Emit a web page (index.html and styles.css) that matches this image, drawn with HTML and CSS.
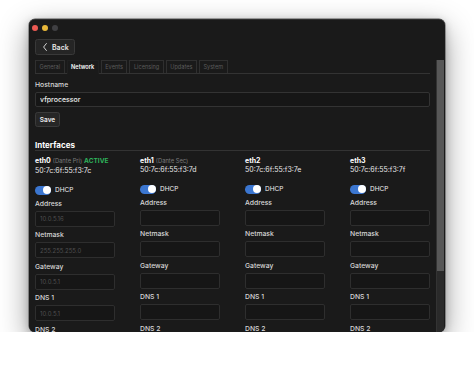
FILE: index.html
```html
<!DOCTYPE html>
<html lang="en">
<head>
<meta charset="utf-8">
<title>Network settings</title>
<link rel="stylesheet" href="styles.css">
</head>
<body>
<div class="window">
  <div class="titlebar">
    <span class="light red"></span><span class="light yellow"></span><span class="light gray"></span>
  </div>
  <div class="toolbar">
    <button class="back"><svg class="chev" width="4" height="8" viewBox="0 0 4 8"><polyline points="3.4,0.5 0.6,4 3.4,7.5" fill="none" stroke="#e6e6e6" stroke-width="0.9" stroke-linecap="round" stroke-linejoin="round"/></svg><span>Back</span></button>
  </div>
  <div class="main">
    <div class="content">
      <div class="tabs">
        <span class="tab">General</span>
        <span class="tab active">Network</span>
        <span class="tab">Events</span>
        <span class="tab">Licensing</span>
        <span class="tab">Updates</span>
        <span class="tab">System</span>
      </div>
      <div class="label host-label">Hostname</div>
      <input class="host" type="text" value="vfprocessor">
      <button class="save">Save</button>
      <h2 class="section">Interfaces</h2>
      <div class="ifaces">
        <div class="iface">
          <div class="head"><span class="name">eth0</span> <span class="role">(Dante Pri)</span> <span class="active-tag">ACTIVE</span></div>
          <div class="mac">50:7c:6f:55:f3:7c</div>
          <div class="dhcp"><span class="toggle"><span class="knob"></span></span>DHCP</div>
          <div class="label first">Address</div>
          <input class="field" type="text" value="10.0.5.16" disabled>
          <div class="label">Netmask</div>
          <input class="field" type="text" value="255.255.255.0" disabled>
          <div class="label">Gateway</div>
          <input class="field" type="text" value="10.0.5.1" disabled>
          <div class="label">DNS 1</div>
          <input class="field" type="text" value="10.0.5.1" disabled>
          <div class="label">DNS 2</div>
        </div>
        <div class="iface">
          <div class="head"><span class="name">eth1</span> <span class="role">(Dante Sec)</span></div>
          <div class="mac">50:7c:6f:55:f3:7d</div>
          <div class="dhcp"><span class="toggle"><span class="knob"></span></span>DHCP</div>
          <div class="label first">Address</div>
          <input class="field" type="text" disabled>
          <div class="label">Netmask</div>
          <input class="field" type="text" disabled>
          <div class="label">Gateway</div>
          <input class="field" type="text" disabled>
          <div class="label">DNS 1</div>
          <input class="field" type="text" disabled>
          <div class="label">DNS 2</div>
        </div>
        <div class="iface">
          <div class="head"><span class="name">eth2</span></div>
          <div class="mac">50:7c:6f:55:f3:7e</div>
          <div class="dhcp"><span class="toggle"><span class="knob"></span></span>DHCP</div>
          <div class="label first">Address</div>
          <input class="field" type="text" disabled>
          <div class="label">Netmask</div>
          <input class="field" type="text" disabled>
          <div class="label">Gateway</div>
          <input class="field" type="text" disabled>
          <div class="label">DNS 1</div>
          <input class="field" type="text" disabled>
          <div class="label">DNS 2</div>
        </div>
        <div class="iface">
          <div class="head"><span class="name">eth3</span></div>
          <div class="mac">50:7c:6f:55:f3:7f</div>
          <div class="dhcp"><span class="toggle"><span class="knob"></span></span>DHCP</div>
          <div class="label first">Address</div>
          <input class="field" type="text" disabled>
          <div class="label">Netmask</div>
          <input class="field" type="text" disabled>
          <div class="label">Gateway</div>
          <input class="field" type="text" disabled>
          <div class="label">DNS 1</div>
          <input class="field" type="text" disabled>
          <div class="label">DNS 2</div>
        </div>
      </div>
    </div>
    <div class="scrollbar"><div class="thumb"></div></div>
  </div>
</div>
</body>
</html>
```

FILE: styles.css
```css
* { box-sizing: border-box; }

body {
  margin: 0;
  padding: 19px 0 0 29px;
  background: #ffffff;
  font-family: Inter, "Liberation Sans", sans-serif;
}

.window {
  width: 416px;
  height: 313px;
  background: #1a1a1a;
  border-radius: 6px;
  overflow: hidden;
  display: flex;
  flex-direction: column;
  box-shadow: 0 0 0 0.5px rgba(0, 0, 0, 0.6),
              inset 0 0.5px 0 rgba(255, 255, 255, 0.18),
              0 10px 30px rgba(0, 0, 0, 0.42),
              0 2px 8px rgba(0, 0, 0, 0.22);
}

.titlebar {
  height: 17px;
  flex: none;
  display: flex;
  align-items: center;
  gap: 4px;
  padding-left: 3.3px;
}

.light {
  width: 6px;
  height: 6px;
  border-radius: 50%;
}
.light.red { background: #ec5a53; }
.light.yellow { background: #e9b83a; }
.light.gray { background: #3f3f42; }

.toolbar {
  height: 24px;
  flex: none;
  padding: 3px 6px 5px;
  display: flex;
}

.back {
  height: 16px;
  display: flex;
  align-items: center;
  gap: 5px;
  padding: 0 5px 0 7px;
  margin: 0;
  background: #252525;
  border: 1px solid #393939;
  border-radius: 2.5px;
  color: #e8e8e8;
  font-family: Inter, "Liberation Sans", sans-serif;
  font-weight: 600;
  font-size: 7px;
}
.chev { display: block; }

.main {
  flex: 1;
  display: flex;
  min-height: 0;
}

.content {
  flex: 1;
  padding: 0 6px;
  overflow: hidden;
}

.scrollbar {
  width: 8px;
  margin-right: 1px;
  background: #2a2a2a;
  border-left: 1px solid #333;
  flex: none;
}
.thumb {
  height: 211px;
  background: #575757;
}

.tabs {
  display: flex;
  gap: 2px;
  height: 14px;
  border-bottom: 1px solid #333;
}

.tab {
  border: 1px solid #2f2f2f;
  border-bottom: none;
  padding: 0 3.5px;
  font-size: 5.6px;
  line-height: 12px;
  color: #5a5a5a;
  white-space: nowrap;
}
.tab.active {
  color: #ffffff;
  font-weight: 600;
  background: #1a1a1a;
  border-color: #1f1f1f;
  margin-bottom: -1px;
}

.label {
  font-weight: 500;
  font-size: 6.8px;
  line-height: 10px;
  color: #d8d8d8;
}
.host-label { margin-top: 6px; }

.host {
  display: block;
  width: 100%;
  height: 15px;
  margin: 2px 0 0;
  padding: 0 4px;
  background: #161616;
  border: 1px solid #333;
  border-radius: 2px;
  color: #eeeeee;
  font-family: Inter, "Liberation Sans", sans-serif;
  font-weight: 500;
  font-size: 7px;
  outline: none;
}

.save {
  display: block;
  width: 25px;
  height: 15px;
  margin: 5px 0 0;
  padding: 0;
  background: #262626;
  border: 1px solid #3a3a3a;
  border-radius: 2.5px;
  color: #eeeeee;
  font-family: Inter, "Liberation Sans", sans-serif;
  font-weight: 600;
  font-size: 6.5px;
}

.section {
  margin: 13px 0 0;
  font-size: 8px;
  line-height: 10px;
  font-weight: 700;
  color: #ffffff;
  border-bottom: 1px solid #333;
}

.ifaces {
  display: grid;
  grid-template-columns: repeat(4, 1fr);
  column-gap: 25px;
}

.head {
  margin-top: 4.5px;
  line-height: 9.5px;
  font-size: 7px;
  color: #fff;
  white-space: nowrap;
}
.name { font-weight: 700; }
.role { font-size: 5.8px; color: #7a7a7a; }
.active-tag { font-size: 6.5px; font-weight: 700; color: #2eb35a; }

.mac {
  line-height: 9.5px;
  font-size: 7px;
  color: #e8e8e8;
}

.dhcp {
  margin-top: 10px;
  height: 9px;
  display: flex;
  align-items: center;
  gap: 4px;
  font-size: 6.5px;
  color: #eeeeee;
}

.toggle {
  width: 16px;
  height: 9px;
  border-radius: 5px;
  background: #3b76d0;
  display: flex;
  justify-content: flex-end;
  align-items: center;
  padding: 0 0.5px;
}
.knob {
  width: 8px;
  height: 8px;
  border-radius: 50%;
  background: #ffffff;
}

.label.first { margin-top: 4px; }

.field {
  display: block;
  width: 100%;
  height: 16px;
  margin: 2px 0 3.5px;
  padding: 0 4px;
  background: #161616;
  border: 1px solid #2e2e2e;
  border-radius: 2px;
  color: #505050;
  font-family: Inter, "Liberation Sans", sans-serif;
  font-size: 6px;
  outline: none;
}
```
